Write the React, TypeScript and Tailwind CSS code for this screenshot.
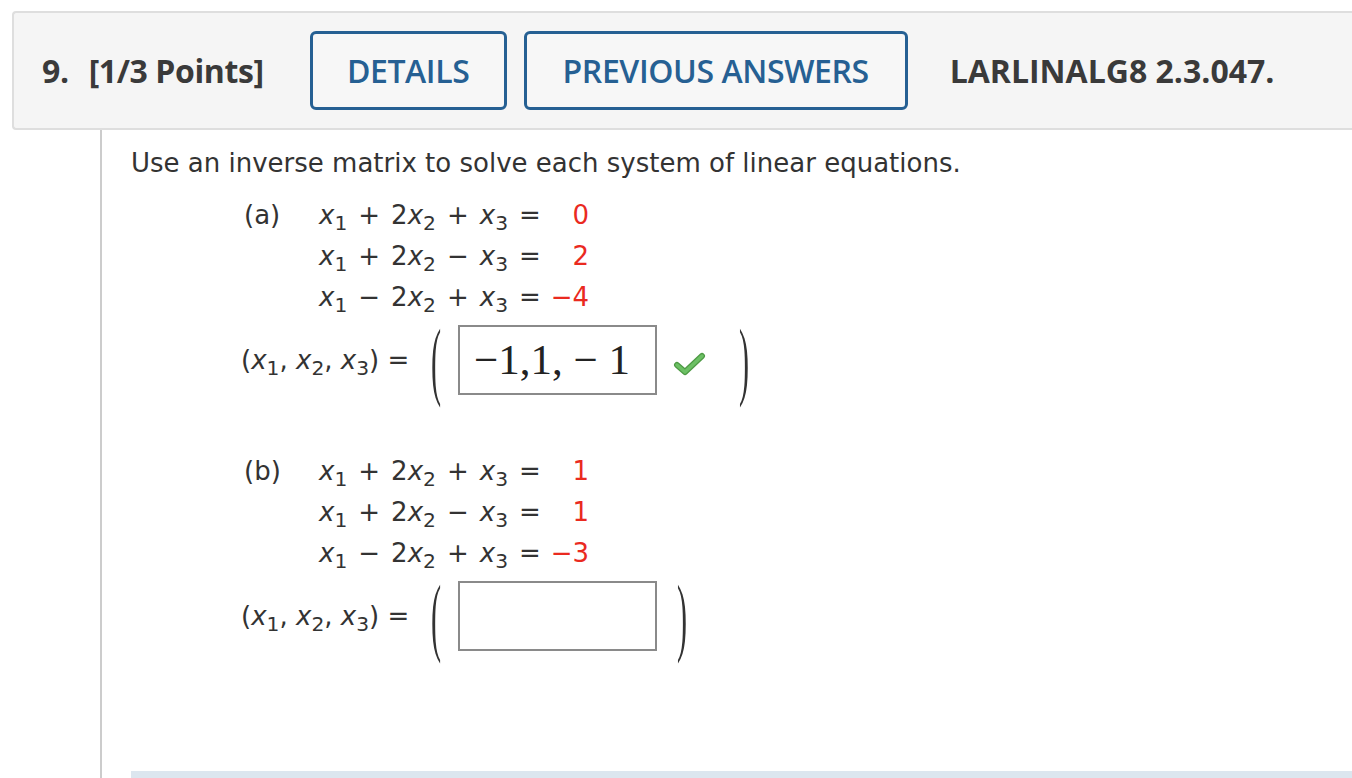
import { ReactNode } from "react";

const X = ({ n }: { n: number }) => (
    <span>
        <span className="italic">x</span>
        <span className="text-[0.78em] leading-none relative top-[0.3em]">{n}</span>
    </span>
);

const Op = ({ c }: { c: string }) => <span className="mx-[11px]">{c}</span>;

type Row = { ops: [string, string]; rhs: string };

const EqSystem = ({ label, rows }: { label: string; rows: Row[] }) => (
    <div className="grid grid-cols-[75px_197px_28px_45px] gap-y-[5px] leading-[36px]">
        {rows.map((r, i) => (
            <div key={i} className="contents">
                <div>{i === 0 ? label : ""}</div>
                <div className="whitespace-nowrap">
                    <X n={1} />
                    <Op c={r.ops[0]} />2<X n={2} />
                    <Op c={r.ops[1]} />
                    <X n={3} />
                </div>
                <div className="text-center">=</div>
                <div className="text-right text-[#ea2a1f]">{r.rhs}</div>
            </div>
        ))}
    </div>
);

const Paren = ({ side }: { side: "l" | "r" }) => (
    <span className="font-['Liberation_Serif',serif] text-[42px] text-[#333] scale-y-[2.05] scale-x-[0.72] inline-block leading-none">
        {side === "l" ? "(" : ")"}
    </span>
);

const Answer = ({ value, correct, closeGap }: { value?: string; correct?: boolean; closeGap: string }) => (
    <div className="flex items-center h-[80px]">
        <div className="w-[188px] whitespace-nowrap">
            (<X n={1} />, <X n={2} />, <X n={3} />) =
        </div>
        <Paren side="l" />
        <div className="ml-[15px] w-[199px] h-[70px] border-2 border-[#8a8a8a] bg-white flex items-center pl-[14px] font-['Liberation_Serif',serif] text-[43px] text-[#222] whitespace-pre">
            {value}
        </div>
        {correct && (
            <svg width="34" height="28" viewBox="0 0 34 28" className="ml-[16px] mt-[8px]">
                <path d="M4 15 L12 22 L29 6" fill="none" stroke="#4e9a45" strokeWidth="6" strokeLinecap="round" strokeLinejoin="round" />
                <path d="M4 15 L12 22 L29 6" fill="none" stroke="#6cc064" strokeWidth="3.5" strokeLinecap="round" strokeLinejoin="round" />
            </svg>
        )}
        <div className={closeGap} />
        <Paren side="r" />
    </div>
);

const Section = ({ children }: { children: ReactNode }) => <div className="ml-[113px]">{children}</div>;

export default function App() {
    return (
        <div className="w-[1352px] h-[778px] bg-white overflow-hidden text-[#333] font-['DejaVu_Sans',Verdana,sans-serif]">
            {/* question header */}
            <div className="mt-[11px] ml-[12px] h-[119px] bg-[#f5f5f5] border-2 border-r-0 border-[#dedede] rounded-l-[4px] flex items-center font-['Open_Sans',sans-serif] font-bold text-[32px] text-[#3a3a3a] tracking-[-0.4px]">
                <span className="ml-[28px]">9.</span>
                <span className="ml-[20px]">[1/3 Points]</span>
                <button className="ml-[46px] h-[79px] w-[197px] border-[3px] border-[#266093] rounded-[6px] bg-[#f7f7f7] text-[#266093] font-semibold">
                    DETAILS
                </button>
                <button className="ml-[17px] h-[79px] w-[384px] border-[3px] border-[#266093] rounded-[6px] bg-[#f7f7f7] text-[#266093] font-semibold">
                    PREVIOUS ANSWERS
                </button>
                <span className="ml-[42px] tracking-[0px]">LARLINALG8 2.3.047.</span>
            </div>

            {/* body */}
            <div className="ml-[100px] border-l-2 border-[#cccccc] h-[649px] pl-[29px] pt-[15px] text-[26px] flex flex-col">
                <p className="leading-[36px]">Use an inverse matrix to solve each system of linear equations.</p>
                <Section>
                    <div className="mt-[16px]">
                        <EqSystem
                            label="(a)"
                            rows={[
                                { ops: ["+", "+"], rhs: "0" },
                                { ops: ["+", "−"], rhs: "2" },
                                { ops: ["−", "+"], rhs: "−4" },
                            ]}
                        />
                    </div>
                    <div className="-ml-[3px] mt-[5px]">
                        <Answer value="−1,1, − 1" correct closeGap="w-[30px]" />
                    </div>
                    <div className="mt-[53px]">
                        <EqSystem
                            label="(b)"
                            rows={[
                                { ops: ["+", "+"], rhs: "1" },
                                { ops: ["+", "−"], rhs: "1" },
                                { ops: ["−", "+"], rhs: "−3" },
                            ]}
                        />
                    </div>
                    <div className="-ml-[3px] mt-[5px]">
                        <Answer closeGap="w-[18px]" />
                    </div>
                </Section>
                <div className="mt-auto h-[8px] bg-[#dce6ef]" />
            </div>
        </div>
    );
}
